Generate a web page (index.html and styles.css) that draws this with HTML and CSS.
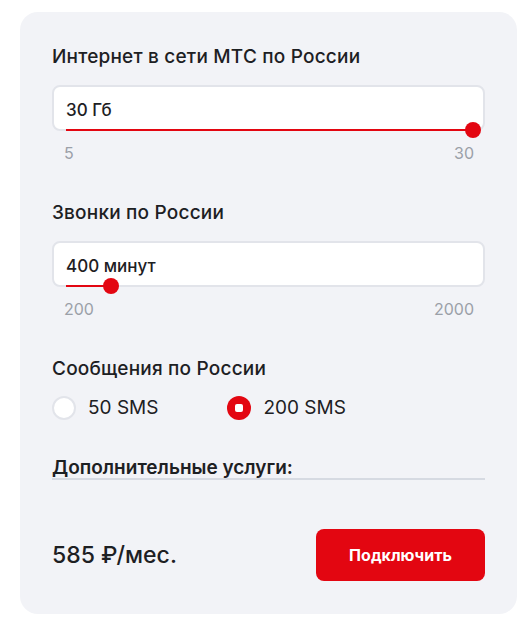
FILE: index.html
```html
<!DOCTYPE html>
<html lang="ru">
<head>
  <meta charset="UTF-8">
  <title>Тариф</title>
  <link rel="stylesheet" href="styles.css">
</head>
<body>
  <div class="card">
    <div class="section">
      <div class="title">Интернет в сети МТС по России</div>
      <div class="field">
        <span class="value">30 Гб</span>
        <div class="track">
          <div class="fill" style="width: 100%"></div>
          <div class="thumb" style="left: 100%"></div>
        </div>
      </div>
      <div class="limits"><span>5</span><span>30</span></div>
    </div>

    <div class="section">
      <div class="title">Звонки по России</div>
      <div class="field">
        <span class="value">400 минут</span>
        <div class="track">
          <div class="fill" style="width: 11.1%"></div>
          <div class="thumb" style="left: 11.1%"></div>
        </div>
      </div>
      <div class="limits"><span>200</span><span>2000</span></div>
    </div>

    <div class="section">
      <div class="title">Сообщения по России</div>
      <div class="radios">
        <label class="radio"><span class="dot"></span>50 SMS</label>
        <label class="radio checked"><span class="dot"></span>200 SMS</label>
      </div>
    </div>

    <div class="extra">Дополнительные услуги:</div>

    <div class="footer">
      <div class="price">585 ₽/мес.</div>
      <button class="connect">Подключить</button>
    </div>
  </div>
</body>
</html>
```

FILE: styles.css
```css
* {
  box-sizing: border-box;
}
body {
  margin: 0;
  padding: 12px 15px 0 20px;
  background: #fff;
  font-family: Inter, 'Noto Sans', sans-serif;
  color: #1d2023;
}
.card {
  background: #f2f3f7;
  border-radius: 18px;
  padding: 33px 32px 33px 32px;
}
.section {
  margin-bottom: 38px;
}
.title {
  font-size: 19px;
  line-height: 24px;
  font-weight: 500;
  letter-spacing: 0.2px;
  margin-bottom: 16px;
}
.field {
  position: relative;
  height: 46px;
  background: #fff;
  border: 2px solid #e2e4ea;
  border-radius: 8px;
  padding: 0 12px;
  display: flex;
  align-items: center;
}
.value {
  font-size: 17px;
  font-weight: 500;
  margin-top: 3px;
}
.track {
  position: absolute;
  left: 12px;
  right: 10px;
  bottom: -2px;
  height: 2px;
}
.fill {
  height: 2px;
  background: #e30611;
}
.thumb {
  position: absolute;
  top: -7px;
  width: 16px;
  height: 16px;
  margin-left: -8px;
  border-radius: 50%;
  background: #e30611;
}
.limits {
  display: flex;
  justify-content: space-between;
  padding: 0 11px 0 12px;
  margin-top: 12px;
  font-size: 16px;
  line-height: 20px;
  color: #9ba0a8;
}
.section:nth-child(3) .title {
  margin-bottom: 15px;
}
.radios {
  display: flex;
  gap: 69px;
}
.radio {
  display: flex;
  align-items: center;
  gap: 12px;
  font-size: 19px;
  line-height: 24px;
}
.dot {
  position: relative;
  width: 24px;
  height: 24px;
  border-radius: 50%;
  background: #fff;
  border: 2px solid #e2e4ea;
}
.checked .dot {
  background: #e30611;
  border: none;
}
.checked .dot::after {
  content: '';
  position: absolute;
  left: 8px;
  top: 8px;
  width: 8px;
  height: 8px;
  border-radius: 2px;
  background: #fff;
}
.extra {
  margin-top: -4px;
  height: 26px;
  overflow: hidden;
  font-size: 19px;
  line-height: 28px;
  font-weight: 600;
  border-bottom: 2px solid #d6dae2;
}
.footer {
  display: flex;
  justify-content: space-between;
  align-items: center;
  margin-top: 49px;
}
.price {
  font-size: 23px;
  font-weight: 500;
}
.connect {
  width: 169px;
  height: 52px;
  border: none;
  border-radius: 8px;
  background: #e30611;
  color: #fff;
  font-family: Inter, 'Noto Sans', sans-serif;
  font-size: 16px;
  font-weight: 700;
  cursor: pointer;
}
```
